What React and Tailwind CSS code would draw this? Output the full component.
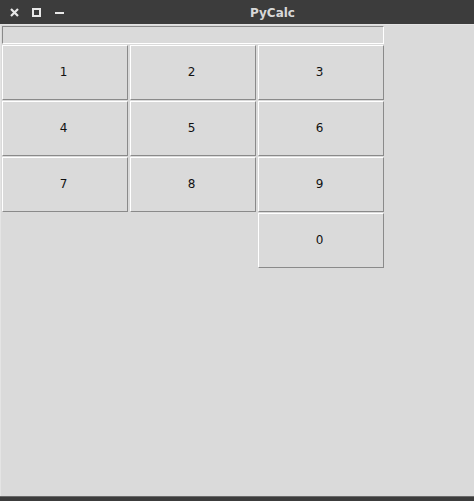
import React from 'react';

const KEYS = ['1', '2', '3', '4', '5', '6', '7', '8', '9'];

const Key = ({ label }) => (
  <button className="h-[55px] w-[126px] border border-t-white border-l-white border-b-[#8a8a8a] border-r-[#8a8a8a] bg-[#dadada] pb-[1px] pr-[3px] text-[12px] text-[#111] outline-none">
    {label}
  </button>
);

const PyCalc = () => {
  return (
    <div className="flex h-[501px] w-[474px] flex-col bg-[#3c3c3c] font-['DejaVu_Sans',sans-serif]">
      {/* title bar */}
      <div className="relative flex h-[24px] shrink-0 items-center">
        <div className="flex items-center gap-[13px] pl-[10px]">
          <svg width="9" height="9" viewBox="0 0 9 9">
            <path d="M1 1L8 8M8 1L1 8" stroke="#e8e8e8" strokeWidth="2.2" />
          </svg>
          <svg width="9" height="9" viewBox="0 0 9 9">
            <rect x="1" y="1" width="7" height="7" fill="none" stroke="#e8e8e8" strokeWidth="2" />
          </svg>
          <svg width="9" height="9" viewBox="0 0 9 9" className="ml-[1px]">
            <path d="M0 5H9" stroke="#e8e8e8" strokeWidth="2" />
          </svg>
        </div>
        <div className="absolute left-[250px] top-[4px] text-[12px] font-bold text-[#d8d8d8]">PyCalc</div>
      </div>

      {/* window body */}
      <div className="flex-1 border-l border-t border-[#e4e4e4] bg-[#dadada] pl-[1px] pt-[1px]">
        <div className="mb-[1px] h-[18px] w-[382px] border border-t-[#8a8a8a] border-l-[#8a8a8a] border-b-white border-r-white bg-[#dadada]" />
        <div className="grid grid-cols-[126px_126px_126px] gap-x-[2px] gap-y-[1px]">
          {KEYS.map((k) => (
            <Key key={k} label={k} />
          ))}
          <div />
          <div />
          <Key label="0" />
        </div>
      </div>
      <div className="h-[5px] shrink-0 border-t border-[#6a6a6a] bg-[#3c3c3c]" />
    </div>
  );
};

export default PyCalc;
